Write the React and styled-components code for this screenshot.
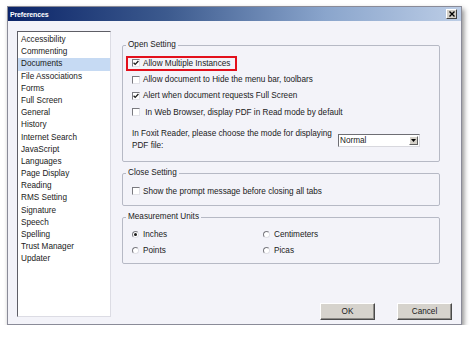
import styled, { createGlobalStyle } from "styled-components";

const GlobalStyle = createGlobalStyle`
  body {
    margin: 0;
    background: #ffffff;
    font-family: "Liberation Sans", Arial, sans-serif;
  }
`;

const categories = [
  "Accessibility",
  "Commenting",
  "Documents",
  "File Associations",
  "Forms",
  "Full Screen",
  "General",
  "History",
  "Internet Search",
  "JavaScript",
  "Languages",
  "Page Display",
  "Reading",
  "RMS Setting",
  "Signature",
  "Speech",
  "Spelling",
  "Trust Manager",
  "Updater",
];

function CheckBox({ checked }) {
  return (
    <Box>
      {checked && (
        <svg width="6" height="6" viewBox="0 0 6 6">
          <path d="M0.6 2.8 L2.2 4.4 L5.4 1" fill="none" stroke="#1a1a1a" strokeWidth="1.3" />
        </svg>
      )}
    </Box>
  );
}

function Radio({ checked, label }) {
  return (
    <RadioRow>
      <Circle>{checked && <Dot />}</Circle>
      <span>{label}</span>
    </RadioRow>
  );
}

export default function App() {
  return (
    <>
      <GlobalStyle />
      <Window>
        <TitleBar>
          <Title>Preferences</Title>
          <CloseButton>
            <svg width="6" height="6" viewBox="0 0 6 6">
              <path d="M0.5 0.5 L5.5 5.5 M5.5 0.5 L0.5 5.5" stroke="#000" strokeWidth="1.4" />
            </svg>
          </CloseButton>
        </TitleBar>
        <Body>
          <Sidebar>
            {categories.map((c) => (
              <Item key={c} selected={c === "Documents"}>
                {c}
              </Item>
            ))}
          </Sidebar>
          <Main>
            <Group>
              <Legend>Open Setting</Legend>
              <Rows>
                <Highlighted>
                  <CheckBox checked />
                  <span>Allow Multiple Instances</span>
                </Highlighted>
                <Row>
                  <CheckBox />
                  <span>Allow document to Hide the menu bar, toolbars</span>
                </Row>
                <Row>
                  <CheckBox checked />
                  <span>Alert when document requests Full Screen</span>
                </Row>
                <Row>
                  <CheckBox />
                  <span>&nbsp;In Web Browser, display PDF in Read mode by default</span>
                </Row>
              </Rows>
              <ModeLine>
                <ModeText>
                  In Foxit Reader, please choose the mode for displaying
                  <br />
                  PDF file:
                </ModeText>
                <Select>
                  <SelectValue>Normal</SelectValue>
                  <SelectArrow>
                    <svg width="5" height="3" viewBox="0 0 5 3">
                      <path d="M0 0 H5 L2.5 3 Z" fill="#000" />
                    </svg>
                  </SelectArrow>
                </Select>
              </ModeLine>
            </Group>

            <Group>
              <Legend>Close Setting</Legend>
              <Rows $bottom={6}>
                <Row>
                  <CheckBox />
                  <span>Show the prompt message before closing all tabs</span>
                </Row>
              </Rows>
            </Group>

            <Group>
              <Legend>Measurement Units</Legend>
              <RadioGrid>
                <Radio checked label="Inches" />
                <Radio label="Centimeters" />
                <Radio label="Points" />
                <Radio label="Picas" />
              </RadioGrid>
            </Group>

            <Buttons>
              <Button>OK</Button>
              <Button>Cancel</Button>
            </Buttons>
          </Main>
        </Body>
      </Window>
    </>
  );
}

const Window = styled.div`
  margin: 6px 0 0 7px;
  width: 455px;
  height: 319px;
  box-sizing: border-box;
  border: 1px solid #8a8b98;
  background: #f3f3f9;
  box-shadow: 2px 3px 5px rgba(0, 0, 0, 0.45);
  display: flex;
  flex-direction: column;
  color: #1a1a1a;
  font-size: 8.2px;
`;

const TitleBar = styled.div`
  height: 14px;
  display: flex;
  align-items: center;
  justify-content: space-between;
  padding: 0 4px 0 2px;
  background: linear-gradient(90deg, #0b2468 0%, #3c5a8e 35%, #8aa5cc 70%, #bccde6 100%);
`;

const Title = styled.div`
  color: #ffffff;
  font-weight: bold;
  font-size: 7px;
  letter-spacing: -0.15px;
`;

const CloseButton = styled.div`
  width: 9px;
  height: 8px;
  display: flex;
  align-items: center;
  justify-content: center;
  background: #d4d0c8;
  border: 1px solid;
  border-color: #ffffff #404040 #404040 #ffffff;
`;

const Body = styled.div`
  flex: 1;
  display: flex;
  padding: 10px 9px 4px 9px;
`;

const Sidebar = styled.div`
  width: 94px;
  height: 286px;
  box-sizing: border-box;
  background: #ffffff;
  border: 1px solid;
  border-color: #5e5e66 #dcdce4 #dcdce4 #5e5e66;
  padding-top: 2px;
`;

const Item = styled.div`
  height: 12.2px;
  line-height: 12.2px;
  padding-left: 3px;
  white-space: nowrap;
  background: ${(p) => (p.selected ? "#c6daf3" : "transparent")};
`;

const Main = styled.div`
  flex: 1;
  margin-left: 11px;
  padding-top: 9px;
  display: flex;
  flex-direction: column;
  gap: 6px;
`;

const Group = styled.fieldset`
  width: 318px;
  box-sizing: border-box;
  margin: 0;
  padding: 0 3px;
  min-width: 0;
  border: 1px solid #b6b9c5;
  border-radius: 2px;
`;

const Legend = styled.legend`
  padding: 0 2px;
  line-height: 10px;
  font-size: 8.2px;
`;

const Rows = styled.div`
  padding: 5px 0 ${(p) => p.$bottom ?? 0}px 6px;
`;

const Row = styled.div`
  height: 16.4px;
  display: flex;
  align-items: center;
  gap: 3px;
  white-space: nowrap;
`;

const Highlighted = styled(Row)`
  position: relative;
  width: fit-content;

  &::before {
    content: "";
    position: absolute;
    top: 1px;
    bottom: 0;
    left: -6px;
    right: -7px;
    border: 2px solid #e3101c;
  }
`;

const Box = styled.div`
  width: 8px;
  height: 8px;
  box-sizing: border-box;
  background: #ffffff;
  border: 1px solid;
  border-color: #7a7a80 #e2e2e8 #e2e2e8 #7a7a80;
  display: flex;
  align-items: center;
  justify-content: center;
  flex-shrink: 0;
`;

const ModeLine = styled.div`
  display: flex;
  align-items: center;
  margin-top: 7.5px;
  padding: 0 0 9px 6px;
`;

const ModeText = styled.div`
  width: 206px;
  line-height: 12px;
  white-space: nowrap;
`;

const Select = styled.div`
  width: 82px;
  height: 13px;
  box-sizing: border-box;
  display: flex;
  background: #ffffff;
  border: 1px solid;
  border-color: #6e6e74 #d8d8de #d8d8de #6e6e74;
`;

const SelectValue = styled.div`
  flex: 1;
  padding-left: 1px;
  line-height: 11px;
`;

const SelectArrow = styled.div`
  width: 9px;
  margin: 1px;
  background: #d4d0c8;
  border: 1px solid;
  border-color: #ffffff #606060 #606060 #ffffff;
  box-sizing: border-box;
  display: flex;
  align-items: center;
  justify-content: center;
`;

const RadioGrid = styled.div`
  display: grid;
  grid-template-columns: 131px auto;
  grid-auto-rows: 16.4px;
  padding: 3.5px 0 4px 6px;
`;

const RadioRow = styled.div`
  display: flex;
  align-items: center;
  gap: 4px;
`;

const Circle = styled.div`
  width: 7px;
  height: 7px;
  box-sizing: border-box;
  border-radius: 50%;
  background: #ffffff;
  border: 1px solid;
  border-color: #7a7a80 #e0e0e6 #e0e0e6 #7a7a80;
  display: flex;
  align-items: center;
  justify-content: center;
`;

const Dot = styled.div`
  width: 3px;
  height: 3px;
  border-radius: 50%;
  background: #1c1c1c;
`;

const Buttons = styled.div`
  margin-top: auto;
  display: flex;
  justify-content: flex-end;
  gap: 22px;
`;

const Button = styled.div`
  width: 55px;
  height: 17px;
  box-sizing: border-box;
  display: flex;
  align-items: center;
  justify-content: center;
  background: #d6d3cd;
  border: 1px solid;
  border-color: #ffffff #4a4a4a #4a4a4a #ffffff;
  box-shadow: inset -1px -1px 0 #8e8c88;
`;
